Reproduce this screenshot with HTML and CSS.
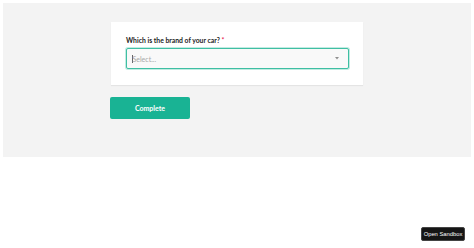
FILE: index.html
```html
<!DOCTYPE html>
<html>
<head>
<meta charset="utf-8">
<link rel="stylesheet" href="styles.css">
</head>
<body>
<div class="survey">
  <div class="card">
    <div class="label">Which is the brand of your car? <span class="req">*</span></div>
    <div class="select">
      <span class="caret"></span><span class="placeholder">Select...</span>
      <svg class="arrow" width="4" height="3" viewBox="0 0 4 3"><path d="M0 0 L4 0 L2 2.5 Z" fill="#909090"/></svg>
    </div>
  </div>
  <div class="actions">
    <button class="complete">Complete</button>
  </div>
</div>
<button class="sandbox">Open Sandbox</button>
</body>
</html>
```
FILE: styles.css
```css
html, body { margin: 0; padding: 0; background: #fff; }
body {
  padding: 3px;
  font-family: "Lato", "Open Sans", sans-serif;
  height: 248px;
  box-sizing: border-box;
}
.survey {
  background: #f3f3f3;
  height: 154px;
  box-sizing: border-box;
  padding-top: 19px;
  display: flex;
  flex-direction: column;
  align-items: center;
}
.card {
  width: 252px;
  background: #fff;
  box-sizing: border-box;
  padding: 13px 14px 16px 15px;
  box-shadow: 0 1px 1px rgba(0,0,0,0.06);
}
.label {
  font-size: 6.8px;
  font-weight: 700;
  color: #1c1c1c;
  line-height: 10px;
  margin-bottom: 3px;
}
.req { color: #e60a3e; font-weight: 400; }
.select {
  height: 21px;
  box-sizing: border-box;
  border: 1.5px solid #3fbfa3;
  box-shadow: 0 0 0 1px #c2ebe2;
  border-radius: 2px;
  background: #f9f9f9;
  display: flex;
  align-items: center;
  padding: 0 9px 0 5px;
}
.caret {
  width: 1px;
  height: 8px;
  background: #666;
}
.placeholder {
  font-size: 7px;
  color: #a8a8a8;
  flex: 1;
  margin-left: -0.5px;
}
.actions { width: 252px; padding-top: 12px; }
.complete {
  display: block;
  width: 80px;
  height: 22px;
  border: none;
  border-radius: 2px;
  background: #19b394;
  color: #fff;
  font-family: "Lato", "Open Sans", sans-serif;
  font-weight: 700;
  font-size: 7px;
  padding: 0;
  margin-left: -1px;
}
.sandbox {
  position: absolute;
  left: 421px;
  top: 227px;
  width: 44px;
  height: 14px;
  background: #151515;
  color: #fff;
  border: 1px solid #444;
  border-radius: 2px;
  font-family: "Liberation Sans", Arial, sans-serif;
  font-size: 5.8px;
  padding: 0;
}
```
